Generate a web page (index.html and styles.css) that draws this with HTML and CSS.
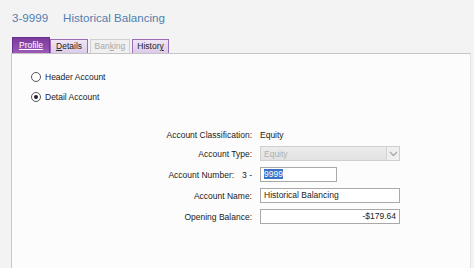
FILE: index.html
```
<!DOCTYPE html>
<html lang="en">
<head>
    <meta charset="UTF-8">
    <title>Historical Balancing</title>
    <link rel="stylesheet" href="styles.css">
</head>
<body>
    <div class="header">
        <span class="acct-no">3-9999</span>
        <span class="acct-title">Historical Balancing</span>
    </div>
    <div class="tabs">
        <div class="tab active"><u>Profile</u></div>
        <div class="tab"><u>D</u>etails</div>
        <div class="tab disabled">Ban<u>k</u>ing</div>
        <div class="tab history">Histor<u>y</u></div>
    </div>
    <div class="panel">
        <div class="radios">
            <label class="radio"><span class="dot"></span>Header Account</label>
            <label class="radio"><span class="dot checked"></span>Detail Account</label>
        </div>
        <div class="form">
            <div class="label">Account Classification:</div>
            <div class="value">Equity</div>

            <div class="label">Account Type:</div>
            <div class="select">
                <span>Equity</span>
                <span class="arrow">
                    <svg width="9" height="6" viewBox="0 0 9 6"><path d="M1 1 L4.5 4.5 L8 1" fill="none" stroke="#a8a8a8" stroke-width="1.3"/></svg>
                </span>
            </div>

            <div class="label">Account Number:<span class="prefix">3 -</span></div>
            <div class="input short"><span class="selected">9999</span></div>

            <div class="label">Account Name:</div>
            <div class="input">Historical Balancing</div>

            <div class="label">Opening Balance:</div>
            <div class="input right">-$179.64</div>
        </div>
    </div>
</body>
</html>
```

FILE: styles.css
```
body {
    margin: 0;
    width: 474px;
    height: 268px;
    overflow: hidden;
    background-color: #f3f3f3;
    font-family: "Liberation Sans", Arial, sans-serif;
    font-size: 8.5px;
    color: #222;
}

.header {
    height: 38px;
    padding-left: 12px;
    display: flex;
    align-items: center;
    gap: 15px;
    font-size: 11.6px;
    color: #4f7fb0;
    box-sizing: border-box;
    padding-bottom: 4px;
}

.tabs {
    display: flex;
    align-items: flex-end;
    height: 15px;
    padding-left: 12px;
}

.tab {
    height: 13px;
    line-height: 13px;
    padding: 0 5px;
    margin-right: 2px;
    background: linear-gradient(#efe6f5, #dccbe8);
    border: 1px solid #9a6cb8;
    border-bottom: none;
    color: #222;
}

.tab.active {
    height: 15px;
    line-height: 15px;
    padding: 0 6px;
    margin-right: 0;
    background: linear-gradient(#7a3a9c, #9c5ab8);
    border-color: #6d2f8e;
    color: #fff;
}

.tab.disabled {
    padding: 0 3.5px;
    background: #f0f0f0;
    border-color: #cfcfcf;
    color: #a8a8a8;
}

.tab.history {
    padding: 0 4.5px;
}

.panel {
    margin-left: 11px;
    margin-right: 3px;
    height: 215px;
    background: #fcfcfc;
    border-top: 1px solid #c4c4c4;
    border-left: 1px solid #c8c8c8;
    border-right: 1px solid #e4e4e4;
}

.radios {
    display: flex;
    flex-direction: column;
    gap: 9px;
    padding: 17px 0 0 19px;
}

.radio {
    display: flex;
    align-items: center;
    gap: 4px;
    height: 11px;
}

.dot {
    width: 8px;
    height: 8px;
    border: 1px solid #555;
    border-radius: 50%;
    background: #fff;
    box-sizing: content-box;
    position: relative;
}

.dot.checked::after {
    content: "";
    position: absolute;
    left: 2px;
    top: 2px;
    width: 4px;
    height: 4px;
    border-radius: 50%;
    background: #222;
}

.form {
    display: grid;
    grid-template-columns: 240px 140px;
    grid-template-rows: 10px;
    grid-auto-rows: 15px;
    row-gap: 6px;
    column-gap: 8px;
    align-items: center;
    margin-top: 28px;
}

.label {
    text-align: right;
}

.prefix {
    margin-left: 8px;
}

.select {
    height: 15px;
    box-sizing: border-box;
    border: 1px solid #cfcfcf;
    background: linear-gradient(#ececec, #e2e2e2);
    color: #b0b0b0;
    display: flex;
    align-items: center;
    justify-content: space-between;
    padding-left: 3px;
}

.arrow {
    width: 12px;
    height: 13px;
    border-left: 1px solid #d4d4d4;
    display: flex;
    align-items: center;
    justify-content: center;
    background: #efefef;
}

.input {
    height: 15px;
    box-sizing: border-box;
    border: 1px solid #a9a9a9;
    background: #fff;
    padding: 0 3px;
    line-height: 13px;
}

.input.short {
    width: 77px;
}

.input.right {
    text-align: right;
}

.selected {
    background: #3a73c6;
    color: #fff;
}
```
